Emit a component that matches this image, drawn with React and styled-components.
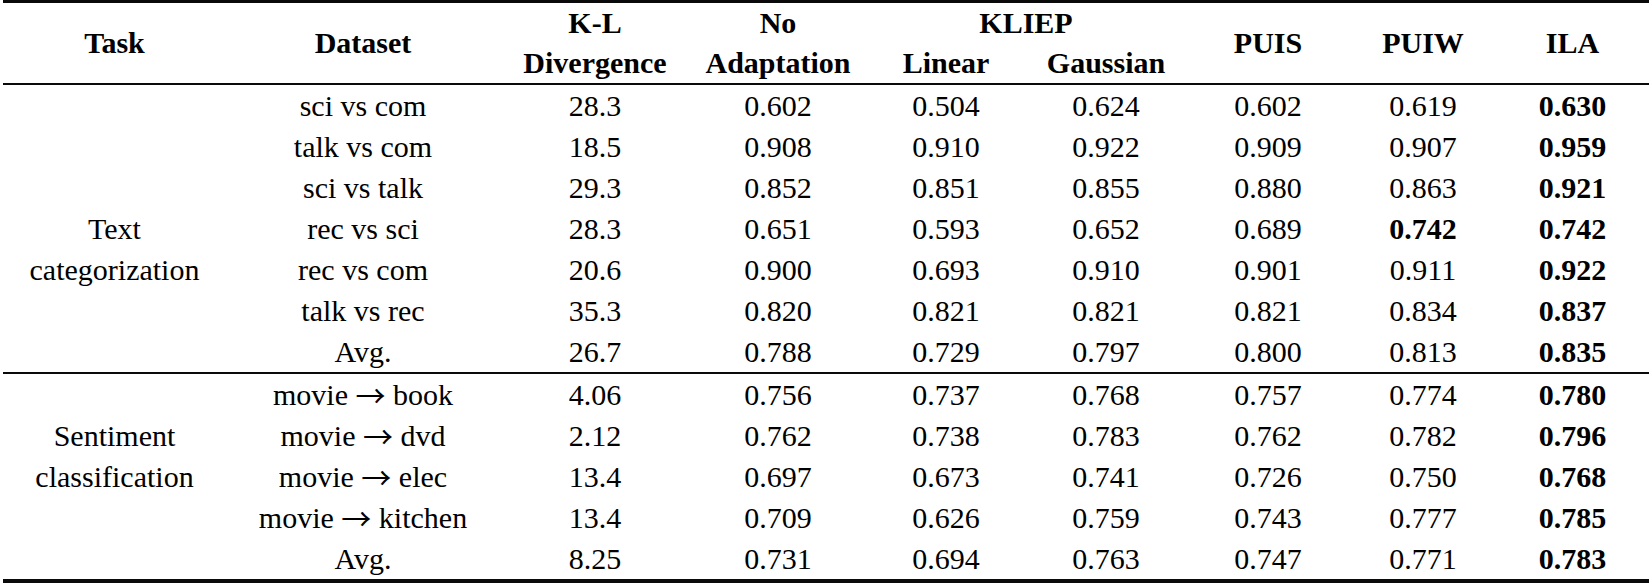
import React from 'react'
import styled, { createGlobalStyle } from 'styled-components'

const SERIF = `"Liberation Serif", Tinos, "Times New Roman", serif`

const GlobalStyle = createGlobalStyle`
   html, body {
      margin: 0;
      padding: 0;
      background: #fff;
   }
   body {
      font-family: ${SERIF};
      color: #000;
   }
`

const ROW = 41
const widths = [223, 274, 190, 176, 160, 160, 164, 146, 153]

const sections = [
   {
      task: ['Text', 'categorization'],
      offset: 3,
      rows: [
         { name: 'sci vs com', kl: '28.3', values: ['0.602', '0.504', '0.624', '0.602', '0.619', '0.630'], best: [5] },
         { name: 'talk vs com', kl: '18.5', values: ['0.908', '0.910', '0.922', '0.909', '0.907', '0.959'], best: [5] },
         { name: 'sci vs talk', kl: '29.3', values: ['0.852', '0.851', '0.855', '0.880', '0.863', '0.921'], best: [5] },
         { name: 'rec vs sci', kl: '28.3', values: ['0.651', '0.593', '0.652', '0.689', '0.742', '0.742'], best: [4, 5] },
         { name: 'rec vs com', kl: '20.6', values: ['0.900', '0.693', '0.910', '0.901', '0.911', '0.922'], best: [5] },
         { name: 'talk vs rec', kl: '35.3', values: ['0.820', '0.821', '0.821', '0.821', '0.834', '0.837'], best: [5] },
         { name: 'Avg.', kl: '26.7', values: ['0.788', '0.729', '0.797', '0.800', '0.813', '0.835'], best: [5] },
      ],
   },
   {
      task: ['Sentiment', 'classification'],
      offset: 1,
      rows: [
         { name: ['movie', 'book'], kl: '4.06', values: ['0.756', '0.737', '0.768', '0.757', '0.774', '0.780'], best: [5] },
         { name: ['movie', 'dvd'], kl: '2.12', values: ['0.762', '0.738', '0.783', '0.762', '0.782', '0.796'], best: [5] },
         { name: ['movie', 'elec'], kl: '13.4', values: ['0.697', '0.673', '0.741', '0.726', '0.750', '0.768'], best: [5] },
         { name: ['movie', 'kitchen'], kl: '13.4', values: ['0.709', '0.626', '0.759', '0.743', '0.777', '0.785'], best: [5] },
         { name: 'Avg.', kl: '8.25', values: ['0.731', '0.694', '0.763', '0.747', '0.771', '0.783'], best: [5] },
      ],
   },
]

// "source → target" pairs get a thin, long arrow
const DatasetName = ({ name }) =>
   Array.isArray(name) ? (
      <>
         {name[0]} <Arrow>→</Arrow> {name[1]}
      </>
   ) : (
      name
   )

const App = () => {
   return (
      <Page>
         <GlobalStyle />
         <Table>
            <colgroup>
               {widths.map((w, i) => (
                  <col key={i} style={{ width: w }} />
               ))}
            </colgroup>
            <thead>
               <tr>
                  <HeadCell rowSpan={2} $rule>Task</HeadCell>
                  <HeadCell rowSpan={2} $rule>Dataset</HeadCell>
                  <HeadCell rowSpan={2} $rule>
                     K-L
                     <br />
                     Divergence
                  </HeadCell>
                  <HeadCell rowSpan={2} $rule>
                     No
                     <br />
                     Adaptation
                  </HeadCell>
                  <HeadCell colSpan={2}>KLIEP</HeadCell>
                  <HeadCell rowSpan={2} $rule>PUIS</HeadCell>
                  <HeadCell rowSpan={2} $rule>PUIW</HeadCell>
                  <HeadCell rowSpan={2} $rule>ILA</HeadCell>
               </tr>
               <tr>
                  <HeadCell $rule>Linear</HeadCell>
                  <HeadCell $rule>Gaussian</HeadCell>
               </tr>
            </thead>
            {sections.map((section, si) => {
               const last = si === sections.length - 1
               return (
                  <tbody key={si}>
                     {section.rows.map((row, ri) => {
                        const rule = !last && ri === section.rows.length - 1
                        return (
                           <tr key={ri}>
                              {ri === 0 && (
                                 <TaskCell
                                    rowSpan={section.rows.length}
                                    $offset={section.offset}
                                    $rule={!last}
                                 >
                                    {section.task[0]}
                                    <br />
                                    {section.task[1]}
                                 </TaskCell>
                              )}
                              <Cell $rule={rule}>
                                 <DatasetName name={row.name} />
                              </Cell>
                              <Cell $rule={rule}>{row.kl}</Cell>
                              {row.values.map((v, vi) => (
                                 <Cell key={vi} $rule={rule} $bold={row.best.includes(vi)}>
                                    {v}
                                 </Cell>
                              ))}
                           </tr>
                        )
                     })}
                  </tbody>
               )
            })}
         </Table>
      </Page>
   )
}
export default App

const Page = styled.div`
   width: 1651px;
   padding-left: 3px;
   box-sizing: border-box;
`
const Table = styled.table`
   width: 1646px;
   table-layout: fixed;
   border-collapse: separate;
   border-spacing: 0;
   border-top: 3px solid #0a0a0a;
   border-bottom: 4px solid #0a0a0a;
   font-family: ${SERIF};
   font-size: 30px;
   color: #000;
`
const HeadCell = styled.th`
   height: 40px;
   padding: 0;
   line-height: 40px;
   font-weight: 700;
   text-align: center;
   vertical-align: middle;
   white-space: nowrap;
   border-bottom: ${(p) => (p.$rule ? '2px solid #0a0a0a' : 'none')};
`
const Cell = styled.td`
   height: ${ROW}px;
   padding: 0;
   line-height: ${ROW}px;
   text-align: center;
   vertical-align: middle;
   white-space: nowrap;
   font-weight: ${(p) => (p.$bold ? 700 : 400)};
   border-bottom: ${(p) => (p.$rule ? '2px solid #0a0a0a' : 'none')};
`
const TaskCell = styled.td`
   padding: ${(p) => p.$offset * ROW}px 0 0;
   line-height: ${ROW}px;
   text-align: center;
   vertical-align: top;
   border-bottom: ${(p) => (p.$rule ? '2px solid #0a0a0a' : 'none')};
`
const Arrow = styled.span`
   font-family: "Noto Sans CJK SC", sans-serif;
   font-size: 30px;
   line-height: 0;
   vertical-align: -2px;
`
